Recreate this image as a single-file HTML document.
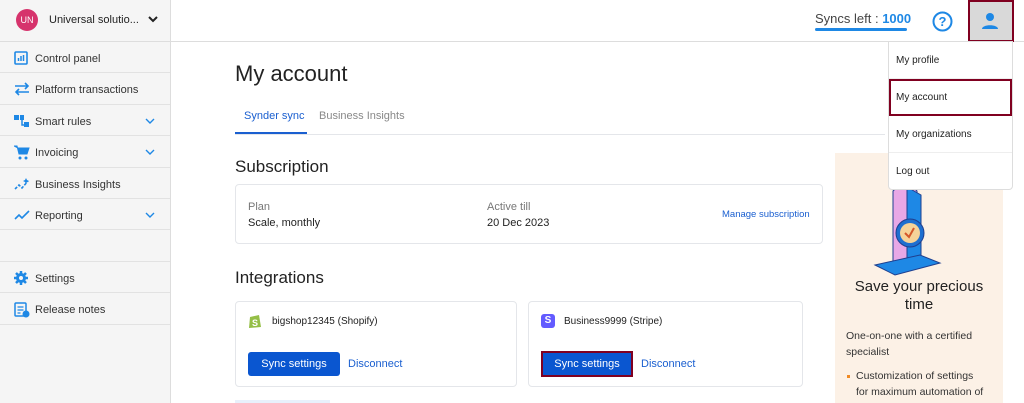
<!DOCTYPE html>
<html><head><meta charset="utf-8"><style>
*{box-sizing:border-box;margin:0;padding:0}
body{width:1024px;height:403px;overflow:hidden;background:#fff;font-family:"Liberation Sans",Roboto,sans-serif;color:#222;position:relative}
.sb{position:absolute;left:0;top:0;width:171px;height:403px;background:#f5f5f5;border-right:1px solid #ddd}
.sbh{height:42px;border-bottom:1px solid #ddd;position:relative}
.av{position:absolute;left:16px;top:9px;width:22px;height:22px;border-radius:50%;background:#d6336c;color:#fff;font-size:9px;line-height:22px;text-align:center}
.org{position:absolute;left:49px;top:14px;font-size:11px;color:#222}
.it{height:31.4px;border-bottom:1px solid #e2e2e2;position:relative;font-size:11px;color:#333;line-height:34px;padding-left:35px}
.it svg.i{position:absolute;left:14px;top:9px}
.ch{position:absolute;right:15px;top:13px}
.top{position:absolute;left:171px;right:0;top:0;height:42px;border-bottom:1px solid #ddd}
.abs{position:absolute}
.card{position:absolute;border:1px solid #e4e6ea;border-radius:4px;background:#fff}
.btn{position:absolute;background:#0a56d0;color:#fff;font-size:11px;text-align:center;line-height:24px;border-radius:3px}
.lnk{color:#1a5fd0;font-size:11px;position:absolute}
.dd div{height:37px;line-height:37px;padding-left:7px;font-size:10px;color:#222;border-bottom:1px solid #eee}
</style></head><body>
<div class="sb">
 <div class="sbh"><div class="av">UN</div><div class="org">Universal solutio...</div>
 <svg class="abs" style="left:148px;top:15px" width="10" height="8"><path d="M1 2l4 4 4-4" stroke="#222" stroke-width="2" fill="none"/></svg></div>
 <div class="it"><svg class="i" width="14" height="14"><rect x="1" y="1" width="12" height="12" rx="1" fill="none" stroke="#1e88e5" stroke-width="1.6"/><path d="M4.5 10V7M7 10V5M9.5 10V4" stroke="#1e88e5" stroke-width="1.5"/></svg>Control panel</div>
 <div class="it"><svg class="i" width="16" height="14"><path d="M1 4h13M11 1l3 3-3 3M15 10H2M5 7l-3 3 3 3" stroke="#1e88e5" stroke-width="1.6" fill="none"/></svg>Platform transactions</div>
 <div class="it"><svg class="i" width="16" height="14"><rect x="0" y="1" width="5" height="5" fill="#1e88e5"/><rect x="6" y="1" width="4" height="5" fill="#1e88e5"/><rect x="10" y="8" width="5" height="5" fill="#1e88e5"/><path d="M8 5v6h3" stroke="#1e88e5" stroke-width="1.5" fill="none"/></svg>Smart rules<svg class="ch" width="10" height="7"><path d="M1 1l4 4 4-4" stroke="#1e88e5" stroke-width="1.4" fill="none"/></svg></div>
 <div class="it"><svg class="i" width="16" height="16"><path d="M0 1h3l2 8h8l2-6H4z" stroke="#1e88e5" fill="#1e88e5"/><circle cx="6" cy="13" r="1.5" fill="#1e88e5"/><circle cx="12" cy="13" r="1.5" fill="#1e88e5"/></svg>Invoicing<svg class="ch" width="10" height="7"><path d="M1 1l4 4 4-4" stroke="#1e88e5" stroke-width="1.4" fill="none"/></svg></div>
 <div class="it"><svg class="i" width="16" height="14"><path d="M1 12l4-4 3 3 6-7" stroke="#1e88e5" stroke-width="1.6" fill="none" stroke-dasharray="3 1.5"/><path d="M12 1l1 2 2 1-2 1-1 2-1-2-2-1 2-1z" fill="#1e88e5"/></svg>Business Insights</div>
 <div class="it"><svg class="i" width="16" height="14"><path d="M1 11l4-4 3 3 7-7" stroke="#1e88e5" stroke-width="1.6" fill="none"/></svg>Reporting<svg class="ch" width="10" height="7"><path d="M1 1l4 4 4-4" stroke="#1e88e5" stroke-width="1.4" fill="none"/></svg></div>
 <div class="it"></div>
 <div class="it"><svg class="i" width="14" height="14"><circle cx="7" cy="7" r="5" fill="#1e88e5"/><path d="M7 0v14M0 7h14M2 2l10 10M12 2L2 12" stroke="#1e88e5" stroke-width="2.5"/><circle cx="7" cy="7" r="2" fill="#f5f5f5"/></svg>Settings</div>
 <div class="it"><svg class="i" width="16" height="16"><rect x="1" y="1" width="11" height="13" rx="1" fill="none" stroke="#1e88e5" stroke-width="1.5"/><path d="M3.5 5h6M3.5 8h6M3.5 11h3" stroke="#1e88e5" stroke-width="1.3"/><circle cx="12" cy="12" r="3.5" fill="#1e88e5"/></svg>Release notes</div>
</div>
<div class="top"></div>
<div class="abs" style="left:815px;top:11px;font-size:13px;color:#444">Syncs left : <b style="color:#1e88e5">1000</b></div>
<div class="abs" style="left:815px;top:28px;width:92px;height:3px;border-radius:2px;background:#1e88e5"></div>
<svg class="abs" style="left:932px;top:11px" width="21" height="21"><circle cx="10.5" cy="10.5" r="9" fill="none" stroke="#1e88e5" stroke-width="2"/><text x="10.5" y="15" text-anchor="middle" font-size="13" font-weight="bold" fill="#1e88e5" font-family="Liberation Sans">?</text></svg>
<div class="abs" style="left:968px;top:0;width:46px;height:42px;background:#d9d9d9;border:2px solid #800020"></div>
<svg class="abs" style="left:981px;top:12px" width="18" height="18"><circle cx="9" cy="5" r="4" fill="#1e88e5"/><path d="M1 17c0-5 16-5 16 0z" fill="#1e88e5"/></svg>

<div class="abs" style="left:235px;top:61px;font-size:22px;color:#222">My account</div>
<div class="abs" style="left:244px;top:110px;font-size:11px;color:#1a5fd0">Synder sync</div>
<div class="abs" style="left:319px;top:110px;font-size:11px;color:#888">Business Insights</div>
<div class="abs" style="left:235px;top:134px;width:650px;height:1px;background:#e4e6ea"></div>
<div class="abs" style="left:235px;top:132px;width:72px;height:2px;background:#1a5fd0"></div>
<div class="abs" style="left:235px;top:157px;font-size:17px">Subscription</div>
<div class="card" style="left:235px;top:184px;width:588px;height:60px">
 <div class="abs" style="left:12px;top:16px;font-size:11px;color:#777">Plan</div>
 <div class="abs" style="left:12px;top:32px;font-size:11px">Scale, monthly</div>
 <div class="abs" style="left:251px;top:16px;font-size:11px;color:#777">Active till</div>
 <div class="abs" style="left:251px;top:32px;font-size:11px">20 Dec 2023</div>
 <div class="lnk" style="left:486px;top:24px;font-size:9.5px">Manage subscription</div>
</div>
<div class="abs" style="left:235px;top:268px;font-size:17px">Integrations</div>
<div class="card" style="left:235px;top:301px;width:282px;height:86px">
 <svg class="abs" style="left:12px;top:11px" width="14" height="16"><path d="M2 4l9-2 2 12-12 1z" fill="#95bf47"/><text x="7" y="13" font-size="9" fill="#fff" font-weight="bold" text-anchor="middle" font-family="Liberation Sans">S</text></svg>
 <div class="abs" style="left:36px;top:14px;font-size:10px">bigshop12345 (Shopify)</div>
 <div class="btn" style="left:12px;top:50px;width:92px">Sync settings</div>
 <div class="lnk" style="left:112px;top:56px">Disconnect</div>
</div>
<div class="card" style="left:528px;top:301px;width:275px;height:86px">
 <div class="abs" style="left:12px;top:12px;width:14px;height:14px;border-radius:3px;background:#635bff;color:#fff;font-size:10px;font-weight:bold;text-align:center;line-height:14px">S</div>
 <div class="abs" style="left:35px;top:14px;font-size:10px">Business9999 (Stripe)</div>
 <div class="btn" style="left:12px;top:49px;width:92px;border:2px solid #800020;border-radius:0;line-height:22px">Sync settings</div>
 <div class="lnk" style="left:112px;top:56px">Disconnect</div>
</div>
<div class="abs" style="left:235px;top:400px;width:95px;height:3px;background:#e8f0fb"></div>

<div class="abs" style="left:835px;top:153px;width:168px;height:250px;background:#fcf1e6">
 <svg class="abs" style="left:30px;top:30px" width="80" height="95"><path d="M28 8q12-12 24 0v70H28z" fill="#e8a8e6" stroke="#1e3f8f"/><path d="M42 4l14 8v64l-14 4z" fill="#1e88e5" stroke="#1e3f8f"/><circle cx="45" cy="50" r="14" fill="#1e6fd0" stroke="#1e3f8f"/><circle cx="45" cy="50" r="10" fill="#f6d399"/><path d="M40 50l4 4 5-9" stroke="#d4572a" stroke-width="2" fill="none"/><path d="M10 82l45-10 20 8-45 12z" fill="#1e88e5" stroke="#1e3f8f"/></svg>
 <div class="abs" style="left:0;width:168px;top:125px;text-align:center;font-size:15px;line-height:18px">Save your precious<br>time</div>
 <div class="abs" style="left:11px;top:175px;font-size:10.5px;line-height:16px;color:#333">One-on-one with a certified<br>specialist</div>
 <div class="abs" style="left:12px;top:222px;width:3px;height:3px;background:#f08a24"></div>
 <div class="abs" style="left:21px;top:215px;font-size:10.5px;line-height:16px;color:#333">Customization of settings<br>for maximum automation of</div>
</div>

<div class="abs dd" style="left:888px;top:41px;width:125px;height:149px;background:#fff;border:1px solid #ddd;border-radius:0 0 4px 4px">
 <div>My profile</div><div style="border:2px solid #800020;line-height:33px;padding-left:5px">My account</div><div>My organizations</div><div style="border:none">Log out</div>
</div>
</body></html>
